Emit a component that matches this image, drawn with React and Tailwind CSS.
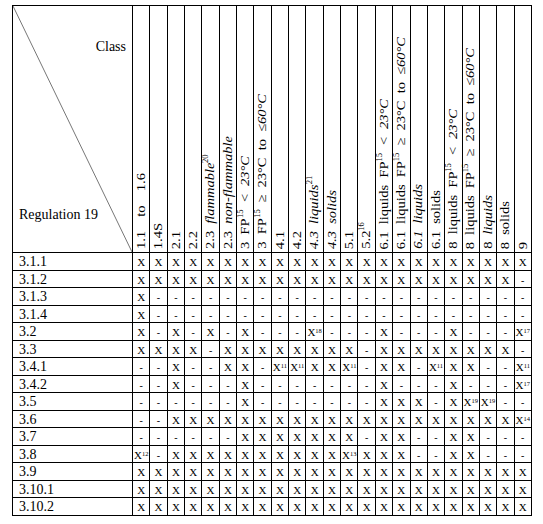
import React from "react";

const S = ({ children }) => <sup className="text-[8.5px] top-0 align-super">{children}</sup>;

const cols = [
  <>1.1&nbsp; to &nbsp;1.6</>,
  <>1.4S</>,
  <>2.1</>,
  <>2.2</>,
  <>2.3 <i>flammable</i><S>20</S></>,
  <>2.3 <i>non-flammable</i></>,
  <>3 FP<S>15</S> <i>&lt; 23°C</i></>,
  <>3 FP<S>15</S> ≥ 23°C to <i>≤60°C</i></>,
  <>4.1</>,
  <>4.2</>,
  <><i>4.3 liquids</i><S>21</S></>,
  <><i>4.3 solids</i></>,
  <>5.1</>,
  <>5.2<S>16</S></>,
  <>6.1 liquids FP<S>15</S> <i>&lt; 23°C</i></>,
  <>6.1 liquids FP<S>15</S> ≥ 23°C to <i>≤60°C</i></>,
  <><i>6.1 liquids</i></>,
  <>6.1 solids</>,
  <>8 liquids FP<S>15</S> <i>&lt; 23°C</i></>,
  <>8 liquids FP<S>15</S> ≥ 23°C to <i>≤60°C</i></>,
  <>8 <i>liquids</i></>,
  <>8 solids</>,
  <>9</>,
];

const allX = Array(23).fill("X").join(" ");

const rows = [
  ["3.1.1", allX],
  ["3.1.2", Array(22).fill("X").join(" ") + " -"],
  ["3.1.3", "X " + Array(22).fill("-").join(" ")],
  ["3.1.4", "X " + Array(22).fill("-").join(" ")],
  ["3.2", "X - X - X - X - - - X18 - - - X - - - X - - - X17"],
  ["3.3", "X X X X - X X X X X X X X - X X X X X X X X -"],
  ["3.4.1", "- - X - - X X - X11 X11 X X X11 - X X - X11 X X - - X11"],
  ["3.4.2", "- - X - - - X - - - - - - - X - - - X - - - X17"],
  ["3.5", "- - - - - - X - - - - - - - X X X - X X19 X19 - -"],
  ["3.6", "- - X X X X X X X X X X X X X X X X X X X X X14"],
  ["3.7", "- - - - - - X X X X X X X - X X - - X X - - -"],
  ["3.8", "X12 - X X X X X X X X X X X13 X X X - - X X - - -"],
  ["3.9", allX],
  ["3.10.1", allX],
  ["3.10.2", allX],
];

function Cell({ v }) {
  if (v === "-") return <span className="text-[10px]">-</span>;
  const sup = v.slice(1);
  return (
    <span className="text-[11px]">
      X{sup && <sup className="text-[6.5px]">{sup}</sup>}
    </span>
  );
}

export default function App() {
  return (
    <div className="bg-white w-[543px] h-[524px] pt-[5px] pl-[12px] text-black [font-family:'Liberation_Serif',serif]">
      <table className="table-fixed border-collapse w-[520px]">
        <colgroup>
          <col className="w-[120px]" />
          {cols.map((_, i) => (
            <col key={i} />
          ))}
        </colgroup>
        <thead>
          <tr>
            <th className="relative border border-black p-0 h-[247px] font-normal">
              <svg className="absolute inset-0 w-full h-full" preserveAspectRatio="none" viewBox="0 0 100 100">
                <line x1="0" y1="0" x2="100" y2="100" stroke="#777" strokeWidth="1" vectorEffect="non-scaling-stroke" />
              </svg>
              <div className="relative flex flex-col h-full justify-between text-[14px] leading-none pt-[34px] pb-[30px]">
                <div className="text-right pr-[6px]">Class</div>
                <div className="text-left pl-[6px]">Regulation 19</div>
              </div>
            </th>
            {cols.map((c, i) => (
              <th key={i} className="border border-black p-0 h-[247px] font-normal">
                <div className="h-full flex items-end justify-center">
                  <div className="[writing-mode:vertical-rl] rotate-180 scale-x-[0.88] whitespace-nowrap text-[14.5px] leading-none mb-[3px] [word-spacing:3.5px]">
                    {c}
                  </div>
                </div>
              </th>
            ))}
          </tr>
        </thead>
        <tbody>
          {rows.map(([label, data]) => (
            <tr key={label} className="h-[17.5px]">
              <td className="border border-black px-[6px] py-0 text-[14px] leading-none pt-[2px]">{label}</td>
              {data.split(" ").map((v, i) => (
                <td key={i} className="border border-black p-0 text-center leading-none">
                  <Cell v={v} />
                </td>
              ))}
            </tr>
          ))}
        </tbody>
      </table>
    </div>
  );
}
